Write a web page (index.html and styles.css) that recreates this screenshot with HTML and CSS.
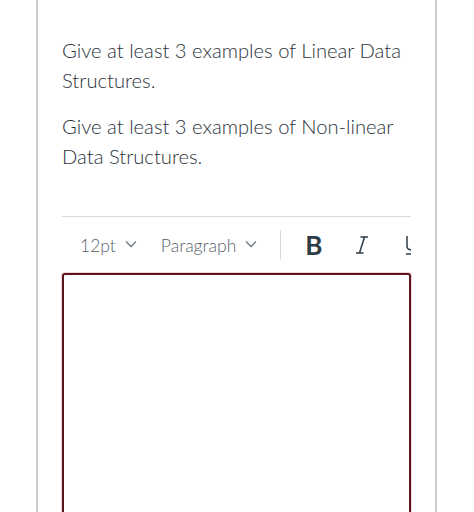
FILE: index.html
```html
<!DOCTYPE html>
<html lang="en">
<head>
<meta charset="utf-8">
<title>Question</title>
<link rel="stylesheet" href="styles.css">
</head>
<body>
<div class="card">
  <div class="question">
    <p>Give at least 3 examples of Linear Data Structures.</p>
    <p>Give at least 3 examples of Non-linear Data Structures.</p>
  </div>
  <div class="editor">
    <div class="toolbar">
      <span class="dropdown">12pt
        <svg class="chev" width="12" height="8" viewBox="0 0 12 8"><path d="M1 1.5 L6 6.5 L11 1.5" fill="none" stroke="#6b7780" stroke-width="1.3"/></svg>
      </span>
      <span class="dropdown para">Paragraph
        <svg class="chev" width="12" height="8" viewBox="0 0 12 8"><path d="M1 1.5 L6 6.5 L11 1.5" fill="none" stroke="#6b7780" stroke-width="1.3"/></svg>
      </span>
      <span class="sep"></span>
      <span class="btn bold">B</span>
      <span class="btn ital">
        <svg width="14" height="20" viewBox="0 0 14 20"><path d="M5.5 2 H13 M1 18 H8.5 M9.5 2 L4.5 18" fill="none" stroke="#2d3b45" stroke-width="1.5"/></svg>
      </span>
      <span class="btn under">
        <svg width="14" height="22" viewBox="0 0 14 22"><path d="M2 2 V12 Q2 16 7 16 Q12 16 12 12 V2 M1 20 H13" fill="none" stroke="#2d3b45" stroke-width="1.5"/></svg>
      </span>
    </div>
    <div class="area"></div>
  </div>
</div>
</body>
</html>
```
FILE: styles.css
```css
html, body {
  margin: 0;
  padding: 0;
  background: #fff;
}
body {
  font-family: Lato, "Open Sans", sans-serif;
  color: #2d3b45;
  height: 512px;
  overflow: hidden;
}
.card {
  margin-left: 36px;
  min-height: 512px;
  border-left: 2px solid #c7cdd1;
  border-right: 2px solid #c7cdd1;
  padding: 35px 24px 0 24px;
  box-sizing: content-box;
  width: 349px;
}
.question p {
  margin: 0 0 16px 0;
  font-size: 20.2px;
  font-weight: 300;
  line-height: 30px;
  color: #2b333b;
}
.question {
  padding-bottom: 29px;
}
.editor {
  border-top: 1px solid #d7dadd;
}
.toolbar {
  display: flex;
  align-items: center;
  height: 56px;
  overflow: hidden;
  padding-left: 18px;
  white-space: nowrap;
}
.toolbar > * {
  flex-shrink: 0;
}
.dropdown {
  display: inline-flex;
  align-items: center;
  gap: 9px;
  font-size: 17.5px;
  font-weight: 300;
  color: #57626b;
  margin-right: 24px;
}
.para {
  margin-right: 23px;
}
.chev {
  margin-top: -2px;
}
.sep {
  width: 1px;
  height: 30px;
  background: #d7dadd;
  margin-right: 24px;
}
.btn {
  display: inline-flex;
  align-items: center;
}
.bold {
  font-size: 26px;
  font-weight: 700;
  color: #2d3b45;
  margin-right: 33px;
}
.ital {
  margin-right: 36px;
}
.area {
  height: 300px;
  border: 2px solid #5a151a;
  border-radius: 3px;
  box-shadow: 0 0 0 1px rgba(180, 40, 50, 0.2);
}
```
